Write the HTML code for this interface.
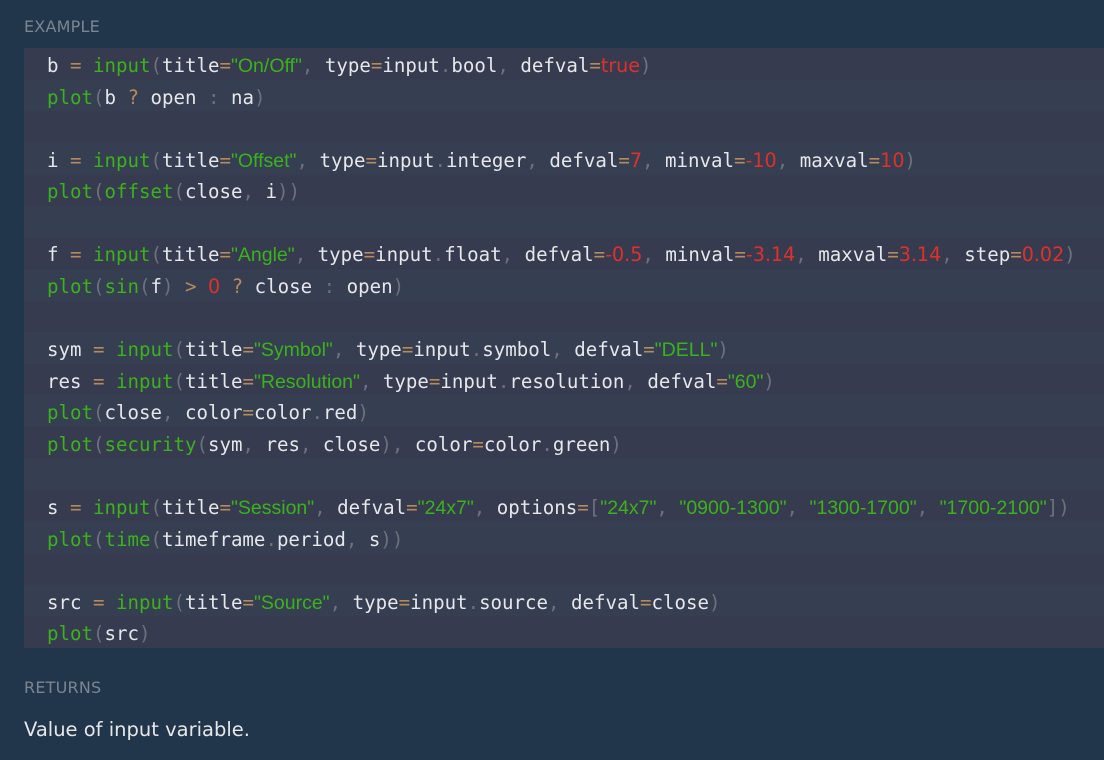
<!DOCTYPE html>
<html><head><meta charset="utf-8"><style>
html,body{margin:0;padding:0;background:#22364b;width:1104px;height:760px;overflow:hidden}
.h{position:absolute;left:24px;font:16px "DejaVu Sans","Liberation Sans",sans-serif;color:#7c8591;letter-spacing:0.2px}
.code{position:absolute;left:24px;top:48px;width:1080px;height:600px;background:#373b4f}
.l{height:31.58px;line-height:35px;padding-left:23px;white-space:pre;font:19.1px/35px "DejaVu Sans Mono","Liberation Mono",monospace;color:#e6e7ea;box-sizing:border-box}
.l:nth-child(even){background:#363e52}
.g{color:#3bb21c}
.s{color:#3bb21c;font-family:"Liberation Sans","DejaVu Sans",sans-serif;font-size:19.5px}
.r{color:#e0302b;font-family:"DejaVu Sans","Liberation Sans",sans-serif}
.o{color:#b58a5c}
.p{color:#6d717d}
.t{position:absolute;left:24px;top:718px;font:19.5px "DejaVu Sans","Liberation Sans",sans-serif;color:#e6e7ea}
</style></head><body>
<div class="h" style="top:17px">EXAMPLE</div>
<div class="code">
<div class="l">b <span class="o">=</span> <span class="g">input</span><span class="p">(</span>title<span class="o">=</span><span class="s">"On/Off"</span><span class="p">,</span> type<span class="o">=</span>input<span class="p">.</span>bool<span class="p">,</span> defval<span class="o">=</span><span class="r">true</span><span class="p">)</span></div>
<div class="l"><span class="g">plot</span><span class="p">(</span>b <span class="o">?</span> open <span class="p">:</span> na<span class="p">)</span></div>
<div class="l"> </div>
<div class="l">i <span class="o">=</span> <span class="g">input</span><span class="p">(</span>title<span class="o">=</span><span class="s">"Offset"</span><span class="p">,</span> type<span class="o">=</span>input<span class="p">.</span>integer<span class="p">,</span> defval<span class="o">=</span><span class="r">7</span><span class="p">,</span> minval<span class="o">=</span><span class="r">-10</span><span class="p">,</span> maxval<span class="o">=</span><span class="r">10</span><span class="p">)</span></div>
<div class="l"><span class="g">plot</span><span class="p">(</span><span class="g">offset</span><span class="p">(</span>close<span class="p">,</span> i<span class="p">))</span></div>
<div class="l"> </div>
<div class="l">f <span class="o">=</span> <span class="g">input</span><span class="p">(</span>title<span class="o">=</span><span class="s">"Angle"</span><span class="p">,</span> type<span class="o">=</span>input<span class="p">.</span>float<span class="p">,</span> defval<span class="o">=</span><span class="r">-0.5</span><span class="p">,</span> minval<span class="o">=</span><span class="r">-3.14</span><span class="p">,</span> maxval<span class="o">=</span><span class="r">3.14</span><span class="p">,</span> step<span class="o">=</span><span class="r">0.02</span><span class="p">)</span></div>
<div class="l"><span class="g">plot</span><span class="p">(</span><span class="g">sin</span><span class="p">(</span>f<span class="p">)</span> <span class="o">&gt;</span> <span class="r">0</span> <span class="o">?</span> close <span class="p">:</span> open<span class="p">)</span></div>
<div class="l"> </div>
<div class="l">sym <span class="o">=</span> <span class="g">input</span><span class="p">(</span>title<span class="o">=</span><span class="s">"Symbol"</span><span class="p">,</span> type<span class="o">=</span>input<span class="p">.</span>symbol<span class="p">,</span> defval<span class="o">=</span><span class="s">"DELL"</span><span class="p">)</span></div>
<div class="l">res <span class="o">=</span> <span class="g">input</span><span class="p">(</span>title<span class="o">=</span><span class="s">"Resolution"</span><span class="p">,</span> type<span class="o">=</span>input<span class="p">.</span>resolution<span class="p">,</span> defval<span class="o">=</span><span class="s">"60"</span><span class="p">)</span></div>
<div class="l"><span class="g">plot</span><span class="p">(</span>close<span class="p">,</span> color<span class="o">=</span>color<span class="p">.</span>red<span class="p">)</span></div>
<div class="l"><span class="g">plot</span><span class="p">(</span><span class="g">security</span><span class="p">(</span>sym<span class="p">,</span> res<span class="p">,</span> close<span class="p">),</span> color<span class="o">=</span>color<span class="p">.</span>green<span class="p">)</span></div>
<div class="l"> </div>
<div class="l">s <span class="o">=</span> <span class="g">input</span><span class="p">(</span>title<span class="o">=</span><span class="s">"Session"</span><span class="p">,</span> defval<span class="o">=</span><span class="s">"24x7"</span><span class="p">,</span> options<span class="o">=</span><span class="p">[</span><span class="s">"24x7"</span><span class="p">,</span> <span class="s">"0900-1300"</span><span class="p">,</span> <span class="s">"1300-1700"</span><span class="p">,</span> <span class="s">"1700-2100"</span><span class="p">])</span></div>
<div class="l"><span class="g">plot</span><span class="p">(</span><span class="g">time</span><span class="p">(</span>timeframe<span class="p">.</span>period<span class="p">,</span> s<span class="p">))</span></div>
<div class="l"> </div>
<div class="l">src <span class="o">=</span> <span class="g">input</span><span class="p">(</span>title<span class="o">=</span><span class="s">"Source"</span><span class="p">,</span> type<span class="o">=</span>input<span class="p">.</span>source<span class="p">,</span> defval<span class="o">=</span>close<span class="p">)</span></div>
<div class="l"><span class="g">plot</span><span class="p">(</span>src<span class="p">)</span></div>
</div>
<div class="h" style="top:678px">RETURNS</div>
<div class="t">Value of input variable.</div>
</body></html>
